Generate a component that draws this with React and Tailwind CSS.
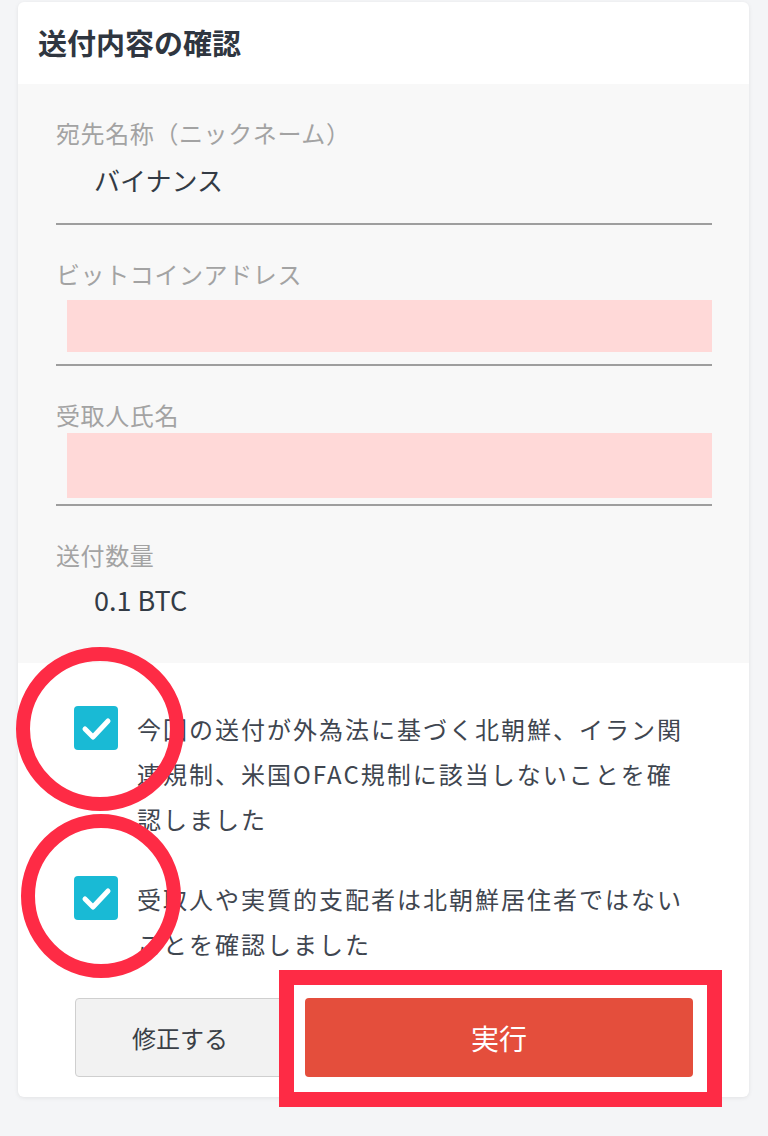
import React from 'react';

const font = { fontFamily: '"Noto Sans CJK JP", "Noto Sans", sans-serif' };

function Field({ label, children }) {
  return (
    <div className="pt-[33px]">
      <p className="text-[24px] leading-[32px] tracking-[0.6px] text-[#a3a3a3]">{label}</p>
      {children}
    </div>
  );
}

function Check() {
  return (
    <div className="w-[44px] h-[44px] shrink-0 rounded-[4px] bg-[#19bad5] flex items-center justify-center">
      <svg width="44" height="44" viewBox="0 0 44 44" fill="none">
        <path d="M11 23 L19 31 L34 15" stroke="white" strokeWidth="5" strokeLinecap="round" strokeLinejoin="round" />
      </svg>
    </div>
  );
}

export default function App() {
  return (
    <div className="relative min-h-[1136px] bg-[#f4f5f7] pt-[2px]" style={font}>
      {/* card */}
      <div className="ml-[18px] w-[731px] bg-white rounded-[6px] shadow-[0_1px_4px_rgba(0,0,0,0.08)] overflow-hidden">
        <div className="h-[82px] px-[20px] flex items-center">
          <h2 className="text-[29px] font-bold text-[#2f3640]">送付内容の確認</h2>
        </div>

        {/* details */}
        <div className="bg-[#f8f8f8] pl-[38px] pr-[37px] pb-[47px]">
          <Field label="宛先名称（ニックネーム）">
            <p className="mt-[15px] ml-[38px] text-[26px] leading-[32px] text-[#333b45]">バイナンス</p>
            <div className="mt-[27px] h-[2px] bg-[#9e9e9e]"></div>
          </Field>
          <Field label="ビットコインアドレス">
            <div className="mt-[10px] ml-[11px] h-[52px] bg-[#ffd9d8]"></div>
            <div className="mt-[12px] h-[2px] bg-[#9e9e9e]"></div>
          </Field>
          <Field label="受取人氏名">
            <div className="mt-[2px] ml-[11px] h-[65px] bg-[#ffd9d8]"></div>
            <div className="mt-[6px] h-[2px] bg-[#9e9e9e]"></div>
          </Field>
          <Field label="送付数量">
            <p className="mt-[13px] ml-[38px] text-[27px] leading-[32px] text-[#333b45]">0.1 BTC</p>
          </Field>
        </div>

        {/* confirmations */}
        <div className="pl-[56px] pt-[43px]">
          <div className="flex items-start gap-[19px]">
            <Check />
            <p className="w-[555px] text-[24px] leading-[45px] tracking-[2px] text-[#3f4650]">
              今回の送付が外為法に基づく北朝鮮、イラン関連規制、米国OFAC規制に該当しないことを確認しました
            </p>
          </div>
          <div className="mt-[35px] flex items-start gap-[19px]">
            <Check />
            <p className="w-[555px] text-[24px] leading-[45px] tracking-[2px] text-[#3f4650]">
              受取人や実質的支配者は北朝鮮居住者ではないことを確認しました
            </p>
          </div>
        </div>

        <div className="pl-[57px] pr-[56px] pt-[32px] pb-[20px] flex gap-[20px]">
          <button className="w-[210px] h-[79px] rounded-[4px] bg-[#f2f2f2] border border-[#cfcfcf] text-[24px] text-[#3a3f46]">
            修正する
          </button>
          <button className="flex-1 h-[79px] rounded-[4px] bg-[#e44e3c] text-[28px] text-white">
            実行
          </button>
        </div>
      </div>

      {/* annotations */}
      <svg className="absolute left-0 top-0 pointer-events-none" width="768" height="1136" viewBox="0 0 768 1136" fill="none">
        <ellipse cx="100" cy="729" rx="77" ry="75" stroke="#fe2b45" strokeWidth="14" />
        <ellipse cx="101" cy="896" rx="73" ry="75" stroke="#fe2b45" strokeWidth="14" />
        <rect x="286.5" y="977.5" width="428" height="122" stroke="#fe2b45" strokeWidth="15" />
      </svg>
    </div>
  );
}
